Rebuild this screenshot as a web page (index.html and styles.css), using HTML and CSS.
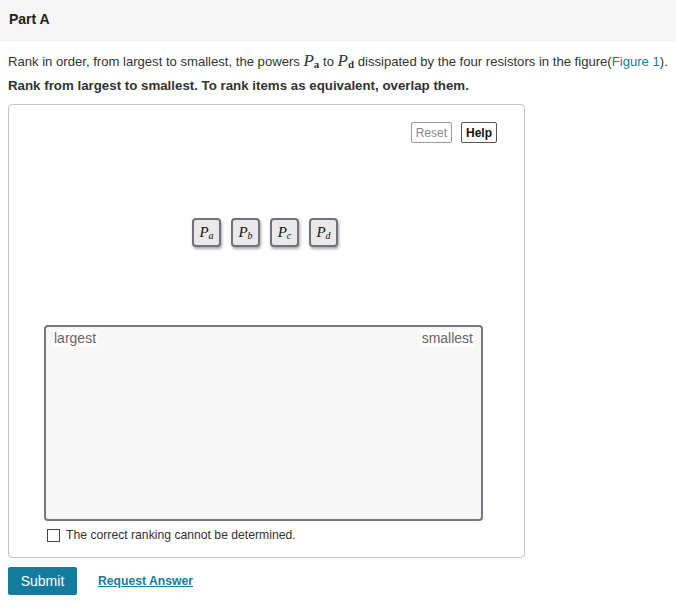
FILE: index.html
```html
<!DOCTYPE html>
<html>
<head>
<meta charset="utf-8">
<link rel="stylesheet" href="styles.css">
</head>
<body>
<div class="part-header">Part A</div>
<p class="prompt">Rank in order, from largest to smallest, the powers <span class="math">P<sub class="upright">a</sub></span> to <span class="math">P<sub class="upright">d</sub></span> dissipated by the four resistors in the figure(<a class="fig-link" href="#">Figure 1</a>).</p>
<p class="instr">Rank from largest to smallest. To rank items as equivalent, overlap them.</p>
<div class="rank-box">
  <div class="toolbar">
    <button class="btn btn-reset">Reset</button>
    <button class="btn btn-help">Help</button>
  </div>
  <div class="tiles">
    <div class="tile"><span class="math">P<sub>a</sub></span></div>
    <div class="tile"><span class="math">P<sub>b</sub></span></div>
    <div class="tile"><span class="math">P<sub>c</sub></span></div>
    <div class="tile"><span class="math">P<sub>d</sub></span></div>
  </div>
  <div class="drop-zone">
    <span class="lbl">largest</span>
    <span class="lbl">smallest</span>
  </div>
  <label class="check-row"><span class="cb"></span>The correct ranking cannot be determined.</label>
</div>
<div class="actions">
  <button class="submit">Submit</button>
  <a class="request" href="#">Request Answer</a>
</div>
</body>
</html>
```
FILE: styles.css
```css
* { box-sizing: border-box; }
body {
  margin: 0;
  font-family: "Liberation Sans", Arial, sans-serif;
  color: #333;
  background: #fff;
}
.part-header {
  background: #f6f6f6;
  height: 42px;
  padding: 11px 9px 0;
  font-weight: bold;
  font-size: 14px;
  color: #222;
}
.prompt {
  margin: 11px 0 0 8px;
  font-size: 13.1px;
  line-height: 16px;
  white-space: nowrap;
}
.math {
  font-family: "Liberation Serif", "Times New Roman", serif;
  font-style: italic;
  font-size: 17px;
}
.math sub {
  font-size: 11px;
  vertical-align: -2px;
  line-height: 0;
}
.math sub.upright { font-style: normal; font-weight: bold; }
.fig-link { color: #1a7b9c; text-decoration: none; }
.instr {
  margin: 8px 0 0 8px;
  font-size: 13.3px;
  font-weight: bold;
  line-height: 16px;
}
.rank-box {
  margin: 10px 0 0 8px;
  width: 517px;
  height: 454px;
  border: 1px solid #c4c4c4;
  border-radius: 4px;
  padding: 17px 0 0 35px;
  display: flex;
  flex-direction: column;
}
.toolbar {
  display: flex;
  justify-content: flex-end;
  gap: 9px;
  padding-right: 27px;
}
.btn {
  font-family: "Liberation Sans", Arial, sans-serif;
  font-size: 12px;
  height: 21px;
  padding: 0 4px;
  background: #fff;
  border: 1px solid #777;
  border-radius: 2px;
}
.btn-reset { color: #888; border-color: #999; }
.btn-help { color: #111; font-weight: bold; border-color: #555; }
.tiles {
  display: flex;
  gap: 10px;
  margin: 75px 0 0 148px;
}
.tile {
  width: 29px;
  height: 29px;
  background: #e9e9e9;
  border: 2px solid #6f7278;
  border-radius: 4px;
  box-shadow: 1px 2px 3px rgba(0,0,0,0.35);
  display: flex;
  align-items: center;
  justify-content: center;
  color: #111;
}
.tile .math { font-size: 15px; }
.tile .math sub { font-size: 10px; vertical-align: -2px; }
.drop-zone {
  margin-top: 78px;
  width: 439px;
  height: 196px;
  border: 2px solid #77777f;
  border-radius: 4px;
  background: #f7f7f7;
  display: flex;
  justify-content: space-between;
  align-items: flex-start;
  padding: 3px 7px 0 7px;
}
.lbl {
  background: #fff;
  font-size: 14px;
  color: #666;
  padding: 0 1px;
  line-height: 17px;
}
.check-row {
  margin-top: 7px;
  display: flex;
  align-items: center;
  font-size: 12.2px;
  color: #333;
}
.cb {
  width: 13px;
  height: 13px;
  border: 1px solid #444;
  margin: 0 6px 0 3px;
  background: #fff;
}
.actions {
  margin: 9px 0 0 8px;
  display: flex;
  align-items: center;
  gap: 21px;
}
.submit {
  width: 69px;
  height: 28px;
  border: none;
  border-radius: 2px;
  background: #137c9c;
  color: #fff;
  font-family: "Liberation Sans", Arial, sans-serif;
  font-size: 14px;
}
.request {
  color: #1a7b9c;
  font-weight: bold;
  font-size: 12.2px;
  text-decoration: underline;
}
```
